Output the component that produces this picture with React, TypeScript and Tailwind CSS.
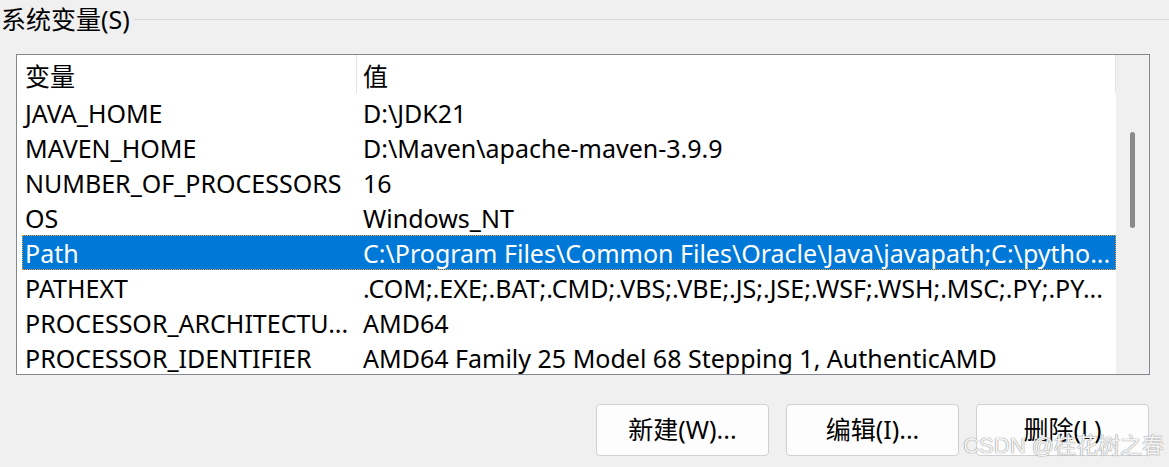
const rows: [string, string][] = [
  ["JAVA_HOME", "D:\\JDK21"],
  ["MAVEN_HOME", "D:\\Maven\\apache-maven-3.9.9"],
  ["NUMBER_OF_PROCESSORS", "16"],
  ["OS", "Windows_NT"],
  ["Path", "C:\\Program Files\\Common Files\\Oracle\\Java\\javapath;C:\\pytho..."],
  ["PATHEXT", ".COM;.EXE;.BAT;.CMD;.VBS;.VBE;.JS;.JSE;.WSF;.WSH;.MSC;.PY;.PY..."],
  ["PROCESSOR_ARCHITECTU...", "AMD64"],
  ["PROCESSOR_IDENTIFIER", "AMD64 Family 25 Model 68 Stepping 1, AuthenticAMD"],
];

const font = { fontFamily: '"Noto Sans", "Noto Sans CJK SC", sans-serif' };
const markFont = { fontFamily: '"Liberation Sans", "Noto Sans CJK SC", sans-serif' };

export default function App() {
  return (
    <div
      className="relative w-[1169px] h-[467px] overflow-hidden bg-[#f0f0f0] text-[25px] text-black"
      style={font}
    >
      {/* group title */}
      <div className="flex items-center h-[40px] -mt-[1px]">
        <span className="pl-[1px] pr-[4px] leading-none">系统变量(S)</span>
        <div className="flex-1 h-px bg-[#dcdcdc]" />
      </div>

      {/* list view */}
      <div className="ml-[16px] mt-[15px] w-[1134px] h-[321px] border border-[#828790] bg-white flex">
        <div className="flex-1 flex flex-col">
          {/* header */}
          <div className="flex h-[40px] items-center">
            <div className="w-[339px] pl-[8px] pt-[3px] h-full flex items-center">变量</div>
            <div className="w-px h-[38px] self-start bg-[#e5e5e5]" />
            <div className="flex-1 pl-[6px] pt-[3px] h-full flex items-center">值</div>
            <div className="w-px h-[38px] self-start bg-[#e5e5e5]" />
          </div>
          {rows.map(([k, v]) => {
            const sel = k === "Path";
            return (
              <div
                key={k}
                className={
                  "ml-[5px] flex h-[35px] items-center pt-[3px] whitespace-nowrap " +
                  (sel
                    ? "bg-[#0078d7] text-white outline-1 outline-dotted outline-[#f0a040] -outline-offset-1"
                    : "")
                }
              >
                <div className="w-[341px] pl-[3px]">{k}</div>
                <div className="flex-1 overflow-hidden">{v}</div>
              </div>
            );
          })}
        </div>
        {/* scrollbar */}
        <div className="w-[33px] bg-[#f0f0f0] flex justify-center">
          <div className="mt-[77px] w-[5px] h-[96px] rounded-full bg-[#8a8a8a]" />
        </div>
      </div>

      {/* buttons */}
      <div className="mt-[29px] flex justify-end gap-[17px] pr-[20px]">
        {["新建(W)...", "编辑(I)...", "删除(L)"].map((b) => (
          <div
            key={b}
            className="w-[173px] h-[52px] rounded-[4px] border border-[#d0d0d0] bg-[#fdfdfd] flex items-center justify-center"
          >
            {b}
          </div>
        ))}
      </div>

      {/* watermark */}
      <div
        className="absolute right-[5px] top-[435px] text-[22px] leading-none text-white/90 whitespace-nowrap [text-shadow:0_0_1px_#8a8a8a,0_0_1px_#8a8a8a]"
        style={markFont}
      >
        CSDN @桂花树之春
      </div>
    </div>
  );
}
